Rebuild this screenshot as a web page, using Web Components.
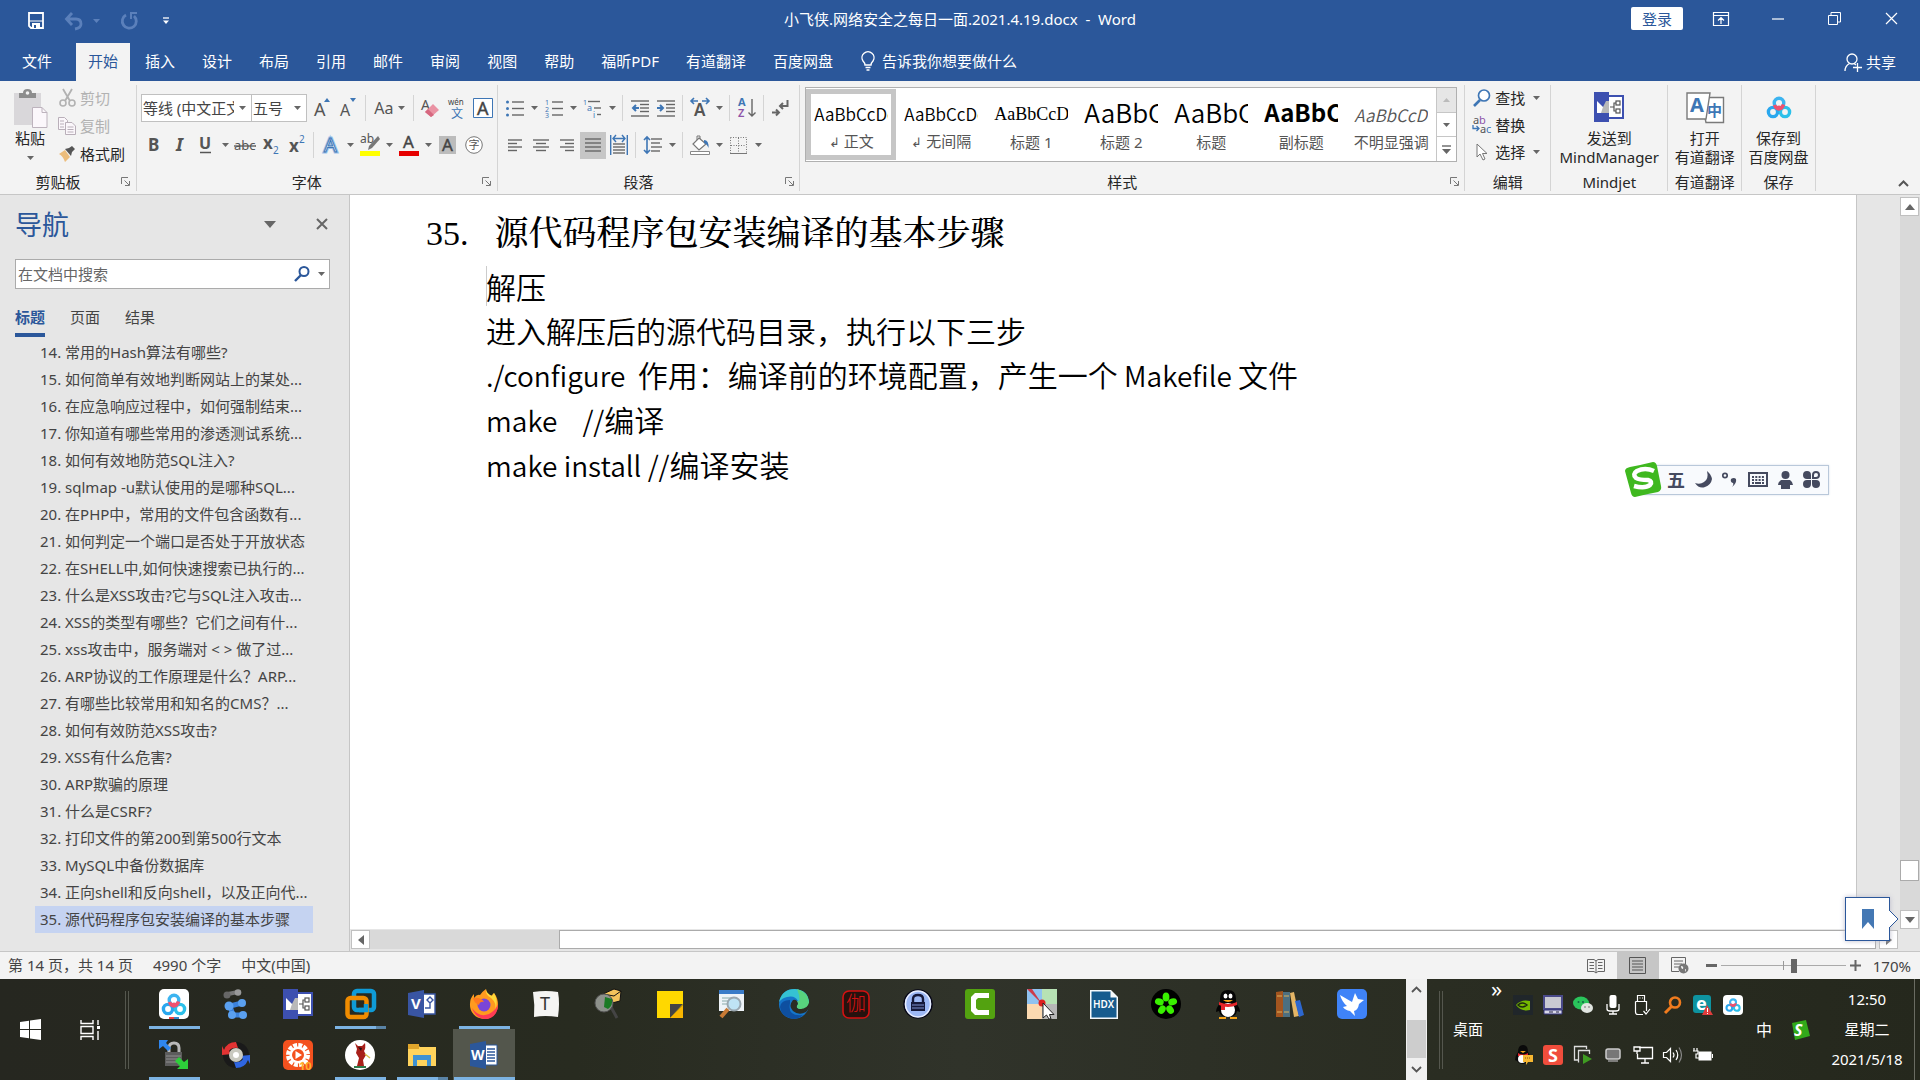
<!DOCTYPE html>
<html lang="zh-CN">
<head>
<meta charset="utf-8">
<title>小飞侠.网络安全之每日一面.2021.4.19.docx - Word</title>
<style>
html,body{margin:0;height:100%}
body{font:15px/20px "Noto Sans","Noto Sans CJK SC",sans-serif;color:#262626;overflow:hidden}
</style>
</head>
<body>
<word-app></word-app>
<script>
const BASE = `*{box-sizing:border-box}
button{font:inherit;color:inherit;background:none;border:0;padding:0;margin:0;cursor:default;display:flex;align-items:center;justify-content:center}
a{color:inherit;text-decoration:none}
ui-icon{flex:none}`;

function define(tag, css, html) {
  customElements.define(tag, class extends HTMLElement {
    connectedCallback() {
      if (this.shadowRoot) return;
      const t = document.createElement('template');
      t.innerHTML = `<style>${BASE}${css}</style>` + (typeof html === 'function' ? html(this) : html);
      this.attachShadow({mode: 'open'}).append(t.content.cloneNode(true));
    }
  });
}

/* name: [width, height, markup] */
const G = '#666', B = '#3e76b5';
const lines = (pts, c = G) => pts.map(p => `<path d="M${p[0]} ${p[1]}H${p[2]}" stroke="${c}" stroke-width="1.4"/>`).join('');
const T = (x, y, s, size, fill, extra = '') => `<text x="${x}" y="${y}" font-size="${size}" fill="${fill}" ${extra}>${s}</text>`;
const cloud = `<g fill="none" stroke-width="3.4"><circle cx="7" cy="16" r="4.6" stroke="#29a7ee"/><circle cx="19" cy="16" r="4.6" stroke="#2bc0ea"/><circle cx="13" cy="7" r="4.8" stroke="#3cb4f0"/><path d="M8.5 9Q10 13 13 12.500Q16.500 12.500 17.500 8.500" stroke="#f0506e"/></g><circle cx="13" cy="12" r="2.600" fill="#f0506e"/>`;
const mindjet = `<path d="M0 0H15V30H0z" fill="#3d50b0"/><path d="M14 4H29V26H14z" fill="#fff" stroke="#3d50b0" stroke-width="2"/><path d="M3 9L9 15V21H3z" fill="#fff"/><path d="M9 15L12 9H15V21H7z" fill="#b9b9b9"/><g fill="none" stroke="#555" stroke-width="1.200"><path d="M16 15H20M22 11H20V19H22"/><rect x="22" y="9" width="4" height="4"/><rect x="22" y="17" width="4" height="4"/></g>`;
const ICONS = {
  caret: [7,4,`<path d="M0 0H7L3.500 4z" fill="#666"/>`],
  save: [16,17,`<path d="M1 1H15V16H3L1 14z" fill="none" stroke="#fff" stroke-width="1.800"/><path d="M1 9H15" stroke="#fff"/><path d="M4 11H12V16H4z" fill="#fff"/><path d="M6 13H8V16H6z" fill="#2b579a"/>`],
  undo: [18,18,`<path d="M2 7H11Q16 7 16 12Q16 16 10 17M7 1L1.500 7L7 13" fill="none" stroke="#5b80bb" stroke-width="2.800"/>`],
  redo: [17,18,`<path d="M5 3A7 7 0 1 0 13 4" fill="none" stroke="#5b80bb" stroke-width="2.800"/><path d="M9 0H16V2H11V7H9z" fill="#5b80bb"/>`],
  caretDim: [7,4,`<path d="M0 0H7L3.500 4z" fill="#5b80bb"/>`],
  custom: [6,7,`<path d="M0 1H6" stroke="#fff" stroke-width="1.300"/><path d="M0 3.500H6L3 7z" fill="#fff"/>`],
  ribbonopt: [16,14,`<path d="M.5 .5H15.500V13.500H.5zM.5 3.500H15.500M8 12V6M5 8.500L8 5.500L11 8.500" fill="none" stroke="#fff" stroke-width="1.200"/>`],
  min: [12,2,`<path d="M0 1H12" stroke="#fff" stroke-width="1.200"/>`],
  restore: [13,13,`<path d="M.5 3.500H9.500V12.500H.5zM3 3V.5H12.500V10H10" fill="none" stroke="#fff"/>`],
  close: [13,13,`<path d="M1 1L12 12M12 1L1 12" stroke="#fff" stroke-width="1.200"/>`],
  closeG: [12,12,`<path d="M1 1L11 11M11 1L1 11" stroke="#666" stroke-width="2"/>`],
  bulb: [16,20,`<path d="M5 14Q5 12 3 10A6 6 0 1 1 13 10Q11 12 11 14zM5.500 16.500H10.500M6.500 19H9.500" fill="none" stroke="#fff" stroke-width="1.400"/>`],
  share: [18,19,`<circle cx="8" cy="6" r="5" fill="none" stroke="#fff" stroke-width="1.300"/><path d="M1 18Q1 13 5.500 10.500M10 10.500L12 12M13.500 10V19M9 14.500H18" fill="none" stroke="#fff" stroke-width="1.300"/>`],
  paste: [35,39,`<path d="M1 4H28V36H1z" fill="#d9d7da"/><path d="M6 4H10Q10 0 14.500 0Q19 0 19 4H23V9H6z" fill="#8d8d8d"/><circle cx="14.500" cy="4" r="1.800" fill="#f3f3f3"/><path d="M19.500 18.500H29L34 23.500V38.500H19.500z" fill="#fbf7fb" stroke="#bdb3bd"/><path d="M29 18.500V23.500H34" fill="none" stroke="#bdb3bd"/>`],
  cut: [17,18,`<path d="M4 0L11 12M13 0L6 12" stroke="#b2b2b2" stroke-width="1.800"/><g fill="none" stroke="#b2b2b2" stroke-width="1.600"><circle cx="4" cy="14" r="3"/><circle cx="13" cy="14" r="3"/></g>`],
  copy: [18,18,`<g fill="#fbf7fb" stroke="#b9afb9"><path d="M.5 .5H6.500L9.500 3.500V12.500H.5z"/><path d="M7.500 5.500H14L17.500 9V17.500H7.500z"/></g><path d="M2 4H6M2 7H6M2 10H6M9.500 10H15.500M9.500 12.500H15.500M9.500 15H15.500" stroke="#b9afb9"/>`],
  painter: [17,16,`<path d="M0 8L6 4L11 11L6 16Q4 10 0 8z" fill="#ecbd7c"/><path d="M6 3L10 2L13 0L16 3L13 6L12 10z" fill="#555"/>`],
  growA: [18,20,T(0,18,'A',18,'#555')+`<path d="M10 4L13 0L16 4z" fill="${B}"/>`],
  shrinkA: [18,20,T(0,18,'A',16,'#555')+`<path d="M10 0H16L13 4z" fill="${B}"/>`],
  eraser: [19,20,T(0,12,'A',14,'#555')+`<path d="M12 6L18 12L10 19L4 14z" fill="#ea92a3"/><path d="M4 14L7 11L13 17L10 19z" fill="#d6677f"/>`],
  wen: [17,22,T(0,8,'wén',8,'#444')+T(3,21,'文',12,B)],
  boxA: [20,20,`<path d="M.5 .5H19.500V19.500H.5z" fill="#fff" stroke="${B}"/>`+T(4,17,'A',18,'#444','stroke="#444" stroke-width=".4"')],
  bold: [13,16,T(1,14,'B',17,'#555','font-weight="700"')],
  ital: [13,16,T(3,14,'I',18,'#555','font-style="italic" font-family="Liberation Serif" font-weight="700"')],
  under: [13,18,T(0,13,'U',16,'#555','font-weight="700"')+`<path d="M1 16.500H12" stroke="#555" stroke-width="1.500"/>`],
  strike: [22,14,T(0,12,'abc',13,'#555')+`<path d="M0 8H22" stroke="#555" stroke-width="1.300"/>`],
  subx: [16,18,T(0,13,'x',17,'#555','font-weight="700"')+T(10,18,'2',10,B)],
  supx: [16,20,T(0,17,'x',17,'#555','font-weight="700"')+T(10,8,'2',10,B)],
  fx: [15,20,T(1,17,'A',20,'#fff','stroke="#9cc2ea" stroke-width="3"')+T(1,17,'A',20,'#fff',`stroke="${B}" stroke-width="1"`)],
  hilite: [20,22,T(0,9,'ab',12,'#555')+`<path d="M18 2L20 5L12 14L8 16L9 12z" fill="#777"/><path d="M0 17H20V22H0z" fill="#ffff00"/>`],
  fcolor: [20,22,T(4,14,'A',17,'#444','stroke="#444" stroke-width=".4"')+`<path d="M0 17H20V22H0z" fill="#e60000"/>`],
  shadeA: [18,18,`<path d="M0 0H17V18H0z" fill="#bcbcbc"/>`+T(3,15,'A',17,'#444','stroke="#444" stroke-width=".4"')],
  circ: [18,18,`<circle cx="9" cy="9" r="8.300" fill="#fff" stroke="#777"/>`+T(3.500,13,'字',11,'#555')],
  bullets: [18,17,lines([[6,2,18],[6,8.500,18],[6,15,18]])+`<g fill="${B}"><circle cx="1.500" cy="2" r="1.500"/><circle cx="1.500" cy="8.500" r="1.500"/><circle cx="1.500" cy="15" r="1.500"/></g>`],
  numbers: [18,19,lines([[7,3,18],[7,9.500,18],[7,16,18]])+T(0,6,1,7,B)+T(0,13,2,7,B)+T(0,19,3,7,B)],
  multi: [19,19,lines([[5,2.500,17],[11,9,18],[14,15.500,18]])+T(0,6,1,7,B)+T(4,12,'a',9,B)+T(10,19,'i',8,B)],
  outdent: [18,17,lines([[0,1,18],[9,4.500,18],[9,8,18],[9,11.500,18],[0,16,18]])+`<path d="M8 8H2M5 5L2 8L5 11" fill="none" stroke="${B}" stroke-width="2"/>`],
  indent: [18,17,lines([[0,1,18],[9,4.500,18],[9,8,18],[9,11.500,18],[0,16,18]])+`<path d="M0 8H6M3 5L6 8L3 11" fill="none" stroke="${B}" stroke-width="2"/>`],
  awide: [20,20,T(4,18,'A',17,'#555','font-weight="600"')+`<path d="M1 3H8M4 0L1 3L4 6M12 3H19M16 0L19 3L16 6" fill="none" stroke="${B}" stroke-width="1.600"/>`],
  az: [18,20,T(0,8,'A',11,B,'font-weight="700"')+T(0,19,'Z',11,'#8d54a8','font-weight="600"')+`<path d="M14 1V18M10.500 14.500L14 18L17.500 14.500" fill="none" stroke="#666" stroke-width="1.400"/>`],
  marks: [17,17,`<path d="M15.500 0V6H8M11 3L8 6L11 9M0 12.500H7M4 9.500L7 12.500L4 15.500" fill="none" stroke="#666" stroke-width="2"/>`],
  left: [14,13,lines([[0,1,14],[0,4.500,9],[0,8,14],[0,11.500,9]])],
  center: [16,13,lines([[0,1,16],[3,4.500,13],[0,8,16],[3,11.500,13]])],
  right: [14,13,lines([[0,1,14],[5,4.500,14],[0,8,14],[5,11.500,14]])],
  just: [16,14,lines([[0,1,16],[0,5,16],[0,9,16],[0,13,16]])],
  dist: [18,20,`<path d="M.7 0V20M17.300 0V20" stroke="${B}" stroke-width="1.400"/><path d="M3 3.500H15M6 0L3 3.500L6 7M12 0L15 3.500L12 7" fill="none" stroke="${B}" stroke-width="1.400"/>`+lines([[3,9,15],[3,12,15],[3,15,15],[3,18,15]])],
  spacing: [18,18,lines([[7,3,18],[7,7,16],[7,11,18],[7,15,16]])+`<path d="M3 1V17M0 4L3 1L6 4M0 14L3 17L6 14" fill="none" stroke="${B}" stroke-width="1.600"/>`],
  fill: [20,20,`<path d="M9 3L16 9L9 15L3 9z" fill="#fff" stroke="#777" stroke-width="1.200"/><path d="M7 5V1H10V4" fill="none" stroke="#777"/><path d="M14 5Q19 5 18.500 13Q17 9 14 8z" fill="${B}"/><path d="M.5 16.500H19.500V19.500H.5z" fill="#fff" stroke="#888"/>`],
  border: [17,17,`<path d="M.5 .5H16.500V16M.5 .5V16M8.500 1V16M1 8.500H16" fill="none" stroke="#777" stroke-dasharray="1 1.500"/><path d="M0 16.500H17" stroke="#777"/>`],
  launch: [9,9,`<path d="M.5 7V.5H7M3.500 3.500L8 8M8.500 4V8.500H4" fill="none" stroke="#777"/>`],
  find: [18,18,`<circle cx="11" cy="6.500" r="5.500" fill="#fff" stroke="${B}" stroke-width="1.700"/><path d="M7 11L1 17" stroke="${B}" stroke-width="2.600"/>`],
  replace: [20,18,T(1,8,'a',11,'#555')+T(7,8,'b',11,'#8d54a8')+T(8,17,'a',11,'#555')+T(14,17,'c',11,B)+`<path d="M1 9V12.500H7M4.500 10L7 12.500L4.500 15" fill="none" stroke="${B}" stroke-width="1.300"/>`],
  select: [12,18,`<path d="M1 1V14L4 11L7 17L9 16L6.500 10.500H11z" fill="#fff" stroke="#777"/>`],
  mind: [30,30,mindjet],
  youdao: [38,31,`<path d="M14.500 5.500H37.500V30.500H20z" fill="#fff" stroke="#7a7a7a" stroke-width="1.400"/><path d="M1 1H24L20 27H1z" fill="#fff" stroke="#7a7a7a" stroke-width="1.400"/>`+T(4,20,'A',20,B,'font-weight="700"')+T(21,24,'中',15,B,'font-weight="700"')],
  baidu: [26,22,cloud],
  up: [11,7,`<path d="M1 6L5.500 1.500L10 6" fill="none" stroke="#555" stroke-width="2"/>`],
  search: [16,16,`<circle cx="10" cy="5.500" r="4.500" fill="none" stroke="#2b579a" stroke-width="2"/><path d="M7 9L1 15" stroke="#2b579a" stroke-width="2.400"/>`],
  down12: [12,7,`<path d="M0 0H12L6 7z" fill="#666"/>`],
  tUp: [10,6,`<path d="M0 6H10L5 0z" fill="#666"/>`],
  tDown: [10,6,`<path d="M0 0H10L5 6z" fill="#666"/>`],
  tLeft: [6,10,`<path d="M6 0V10L0 5z" fill="#666"/>`],
  tRight: [6,10,`<path d="M0 0V10L6 5z" fill="#666"/>`],
  gUp: [7,4,`<path d="M0 4H7L3.500 0z" fill="#bbb"/>`],
  gMore: [9,9,`<path d="M0 1H9" stroke="#666" stroke-width="1.400"/><path d="M0 4H9L4.500 9z" fill="#666"/>`],
  bookmark: [12,20,`<path d="M0 0H12V20L6 13L0 20z" fill="#4478b4"/>`],
  vRead: [18,16,`<path d="M.5 1.500H7L9 3L11 1.500H17.500V13.500H11L9 15L7 13.500H.5zM9 3V15" fill="none" stroke="#666"/><path d="M2.500 4.500H7M2.500 7.500H7M2.500 10.500H7M11 4.500H15.500M11 7.500H15.500M11 10.500H15.500" stroke="#666"/>`],
  vPrint: [17,17,`<path d="M.5 .5H16.500V16.500H.5z" fill="none" stroke="#555"/><path d="M3 4H14M3 7H14M3 10H14M3 13H14" stroke="#555"/>`],
  vWeb: [18,17,`<path d="M8 14.500H.5V.5H14.500V7M3 4H12M3 7H11M3 10H8" fill="none" stroke="#666"/><circle cx="12.500" cy="11.500" r="5" fill="#777"/><path d="M10 9Q13 9 12 12Q10 12 10 9M14 12Q16 12 14 15z" fill="#f3f3f3"/>`],
  minus: [11,3,`<path d="M0 1.500H11" stroke="#666" stroke-width="3"/>`],
  plus: [11,11,`<path d="M0 5.500H11M5.500 0V11" stroke="#666" stroke-width="2"/>`],

  imeLogo: [36,35,`<path d="M5 5Q16 3 28 0Q31 0 32 4L36 24Q37 28 33 30Q22 32 10 35Q7 35 6 31L0 9Q0 6 5 5z" fill="#3fb81f"/><path d="M29 9Q20 5 12 9Q7 12 11 16Q14 18 23 18Q28 19 25 23Q20 27 9 24" fill="none" stroke="#fff" stroke-width="4.500"/>`],
  imeWu: [18,18,T(0,16,'五',18,'#454a5f','font-weight="700"')],
  moon: [17,17,`<path d="M12 0Q14 8 9 11Q5 14 0 12Q4 18 10 16Q16 14 17 8Q16 3 12 0z" fill="#454a5f"/>`],
  punct: [16,15,`<circle cx="3" cy="3.500" r="2.200" fill="none" stroke="#454a5f" stroke-width="1.700"/><path d="M9 7Q12 5 14 7Q15 11 10 15Q12 12 11 11Q8 10 9 7z" fill="#454a5f"/>`],
  kbd: [20,15,`<rect x="1" y="1" width="18" height="13" fill="none" stroke="#454a5f" stroke-width="2"/><path d="M4 5H16M4 8H16" stroke="#454a5f" stroke-width="2" stroke-dasharray="2 1.300"/><path d="M4 11H6M7 11H13M14 11H16" stroke="#454a5f" stroke-width="1.800"/>`],
  person: [15,18,`<circle cx="7.500" cy="4" r="4" fill="#454a5f"/><path d="M3 9H12Q15 11 15 14H12V18H3V14H0Q0 11 3 9z" fill="#454a5f"/>`],
  clover: [17,17,`<g fill="#454a5f"><path d="M8 8H4A4 4 0 1 1 8 4zM8 9V13A4 4 0 1 1 4 9zM9 9H13A4 4 0 1 1 9 13z"/></g><path d="M10 7V4A3 3 0 1 1 13 7z" fill="none" stroke="#454a5f" stroke-width="2"/>`],

  win: [21,21,`<path d="M0 3L9 1.800V10H0zM10 1.600L21 0V10H10zM0 11H9V19.200L0 18zM10 11H21V21L10 19.400z" fill="#fff"/>`],
  tview: [21,20,`<path d="M1 0V3.500H13V0M1 20V16.500H13V20M1 6.500H13V13.500H1zM18 0V5M18 11V20" fill="none" stroke="#fff" stroke-width="1.400"/><path d="M17 6H20V9H17z" fill="#fff"/>`],
  kBaidu: [30,30,`<rect width="30" height="30" rx="5" fill="#fff"/><g transform="translate(2 4)">${cloud}</g><path d="M10 28H15V30H10z" fill="#e44"/><path d="M15 28H20V30H15z" fill="#38c"/>`],
  kXs: [26,30,`<path d="M5 5L15 3" stroke="#777" stroke-width="4"/><circle cx="4" cy="6" r="3.500" fill="#666"/><circle cx="15" cy="3.500" r="3.300" fill="#999"/><path d="M19 14L7 17L10 26L20 26" fill="none" stroke="#3b82dd" stroke-width="5"/><g fill="#5aa0f0"><circle cx="19" cy="14" r="4"/><circle cx="6" cy="17" r="4.500"/><circle cx="9" cy="26" r="4"/><circle cx="20" cy="26" r="4"/></g>`],
  kMind: [30,30,mindjet],
  kVm: [31,31,`<rect x="9" y="2" width="20" height="19" rx="3" fill="none" stroke="#0f9bd7" stroke-width="4.500"/><rect x="2.500" y="9" width="19" height="19" rx="3" fill="none" stroke="#f08c00" stroke-width="4.500"/><path d="M14 21H21V15" fill="none" stroke="#0f9bd7" stroke-width="4.500"/>`],
  kVisio: [28,28,`<path d="M14 4H27V24H14z" fill="#fff" stroke="#3955a3" stroke-width="1.400"/><path d="M0 3L16 0V28L0 25z" fill="#3955a3"/>`+T(3,19,'V',15,'#fff','font-weight="700"')+`<path d="M17 18H22V13M22 7L25 10L22 13L19 10z" fill="none" stroke="#3955a3" stroke-width="1.400"/>`],
  kFox: [30,30,`<path d="M15 30A14 14 0 0 1 1 15Q1 9 5 5V9Q8 5 11 6Q14 2 17 0Q17 5 22 7L25 4Q29 9 29 16A14 14 0 0 1 15 30z" fill="#ff9a1f"/><path d="M3 19Q10 29 20 25Q27 21 29 15Q29 27 19 30Q7 31 3 19z" fill="#ff3b53"/><path d="M17 0Q16 6 22 9Q28 14 26 21Q30 12 25 4L23 7Q17 4 17 0z" fill="#ffd83a"/><circle cx="15" cy="16" r="6.500" fill="#7a45d8"/><path d="M4 9Q12 8 15 13Q11 12 10 16Q5 14 4 9z" fill="#ff7a1f"/>`],
  kT: [28,28,`<path d="M1 2Q14 0 26 2Q28 13 26 27Q13 25 2 27Q3 15 1 2z" fill="#f5f5f3"/>`+T(8,20,'T',18,'#333','font-family="Liberation Serif"')],
  kNet: [28,30,`<path d="M9 5L20 0L27 2L26 12L14 15z" fill="#f3c35c" stroke="#111"/><path d="M9 5L20 7L27 2" fill="none" stroke="#111"/><path d="M17 18L23 29" stroke="#444" stroke-width="3"/><circle cx="10" cy="14" r="9" fill="#8d918b" stroke="#555"/><path d="M11 8L18 10Q19 17 14 20L10 18z" fill="#1b7a25"/>`],
  kNote: [26,27,`<path d="M0 0H26V14L13 27H0z" fill="#ffd800"/><path d="M13 13H26L13 27z" fill="#444"/><path d="M26 14V27H13z" fill="#f7b500"/>`],
  kFind: [26,28,`<path d="M0 0H25V21H0z" fill="#eef3f8"/><path d="M0 0H25V4H0z" fill="#3a7bc8"/><path d="M3 8H14M3 11H12M3 14H11" stroke="#8aa" /><path d="M9 19L2 27" stroke="#c87a35" stroke-width="4"/><circle cx="15" cy="14" r="6.500" fill="#bfe3f5" stroke="#9aa7b0" stroke-width="2"/>`],
  kEdge: [30,30,`<circle cx="15" cy="15" r="15" fill="#1575c9"/><path d="M0 13Q3 0 16 0Q29 1 30 13Q29 20 21 20Q18 19 18 17Q20 15 19 12Q16 6 8 8Q3 9 0 13z" fill="#35c2d3"/><path d="M18 0Q29 3 30 13Q29 20 21 20Q17 19 18 17Q23 12 18 0z" fill="#58d27e"/><path d="M11 14Q8 28 24 26Q20 30 14 30Q2 28 1 18Q2 11 11 11z" fill="#0e4fa0"/><path d="M14 11Q9 17 14 22Q20 27 27 23Q28 22 30 19V14L22 20Q17 20 18 17Q20 14 18 12Q16 10 14 11z" fill="#2b2d24"/><path d="M18 12L30 13Q29 20 21 20Q17 19 18 17Q20 15 18 12z" fill="#58d27e"/>`],
  kJia: [28,29,`<rect x="1" y="1" width="26" height="27" rx="6" fill="#26120e" stroke="#d41111" stroke-width="1.600"/>`+T(4,21,'伽',20,'#d41111','font-weight="300"')],
  kLock: [30,30,`<ellipse cx="15" cy="15" rx="14" ry="14" fill="#9db8f5" stroke="#050515" stroke-width="1.500"/><ellipse cx="15" cy="15" rx="12.500" ry="13" fill="none" stroke="#e7edff" stroke-width="1.500"/><path d="M10 14V10Q10 6 15 6Q20 6 20 10V14" fill="none" stroke="#15183a" stroke-width="2.400"/><path d="M8 13H22V22H8z" fill="#15183a"/><path d="M9 16H21M9 19H21" stroke="#7f90cf"/>`],
  kCam: [30,30,`<rect width="30" height="30" rx="3" fill="#53a210"/><path d="M24 4V9H13L11 11V19L13 21H24V26H10L6 22V8L10 4z" fill="#fff"/>`],
  kPaint: [30,30,`<path d="M0 0H15V15H0z" fill="#8fc2f0"/><path d="M15 0H30V15H15z" fill="#b7e2b4"/><path d="M0 15H15V30H0z" fill="#fbd9b0"/><path d="M15 15H30V30H15z" fill="#b7b7b7"/><path d="M0 0L15 15L5 0z" fill="#cc3b4a"/><circle cx="15" cy="14" r="3.500" fill="#dd1f1f"/><path d="M16 14V29L19.500 26L22 30H24L22.500 25.500H27z" fill="#fff" stroke="#222"/>`],
  kHdx: [28,29,`<path d="M0 0H21L28 7V29H0z" fill="#f5f9fb"/><path d="M1.500 1.500H20.500V7.500H26.500V27.500H1.500z" fill="#175c8e"/>`+T(3,18,'HDX',10,'#fff','font-weight="600"')],
  kFlower: [30,30,`<ellipse cx="15" cy="15" rx="15" ry="15" fill="#000"/><g fill="#39f000"><ellipse cx="15" cy="8" rx="3.400" ry="4.500"/><ellipse cx="15" cy="8" rx="3.400" ry="4.500" transform="rotate(72 15 15)"/><ellipse cx="15" cy="8" rx="3.400" ry="4.500" transform="rotate(144 15 15)"/><ellipse cx="15" cy="8" rx="3.400" ry="4.500" transform="rotate(216 15 15)"/><ellipse cx="15" cy="8" rx="3.400" ry="4.500" transform="rotate(288 15 15)"/></g>`],
  kQq: [24,29,`<path d="M12 0Q20 0 20 9V13Q24 18 24 22L21 21Q20 27 12 27Q4 27 3 21L0 22Q0 18 4 13V9Q4 0 12 0z" fill="#050505"/><ellipse cx="12" cy="20" rx="7" ry="7" fill="#fff"/><path d="M3 12Q12 16 21 12L21 15Q12 19 3 15zM5 15H9V20H5z" fill="#e5252a"/><ellipse cx="9.500" cy="6" rx="2" ry="2.600" fill="#fff"/><ellipse cx="14.500" cy="6" rx="2" ry="2.600" fill="#fff"/><path d="M7 10H17Q12 14 7 10zM3 27H10V29H3zM14 27H21V29H14z" fill="#f5a31a"/>`],
  kBooks: [30,30,`<path d="M1 3L8 2V28H1z" fill="#a3551f"/><path d="M8 3H15V28H8z" fill="#4c6f80"/><path d="M15 4L19 3L24 27L19 28z" fill="#e4b566"/><path d="M20 12L25 11L29 26L24 28z" fill="#2d67cf"/><path d="M2 7H7M2 23H7M9 7H14M9 23H14" stroke="#dcb25c"/>`],
  kBird: [30,30,`<rect width="30" height="30" rx="5" fill="#3f83f8"/><path d="M3 6L15 13L18 4L21 10L27 11L22 15Q21 21 17 22L18 27L13 22Q8 21 6 18L10 17Q5 13 3 6z" fill="#fff"/>`],
  kPadlock: [30,29,`<path d="M10 15V8Q10 3 15 3Q20 3 20 8V15" fill="none" stroke="#b9b9b9" stroke-width="3"/><rect x="6" y="12" width="17" height="14" fill="#5c5c5c"/><path d="M7 16H22M7 19H22M7 22H22" stroke="#8f8f8f"/><path d="M0 0H9L7 3L12 8L9 11L4 6L0 9z" fill="#2f86ee"/><path d="M29 29H18L21 26L16 21L20 17L25 22L29 19z" fill="#2dcf3a"/>`],
  kReel: [28,28,`<circle cx="14" cy="14" r="13" fill="#1a1a1a"/><path d="M14 1Q5 1 2 9L0 5V14L10 13L7 10Q10 6 16 7z" fill="#e23333"/><path d="M14 27Q23 27 26 19L28 23V14L18 15L21 18Q18 22 12 21z" fill="#2f66e2"/><circle cx="14" cy="14" r="7" fill="#c9c9c0"/><circle cx="14" cy="14" r="3" fill="#fff"/>`],
  kOrange: [30,30,`<rect width="30" height="30" rx="5" fill="#f4511e"/><circle cx="15" cy="15" r="10" fill="none" stroke="#fff" stroke-width="4" stroke-dasharray="4 1.236"/><circle cx="15" cy="15" r="8.500" fill="#fff"/><circle cx="15" cy="15" r="6" fill="#f4511e"/><path d="M12.500 11L19 15L12.500 19z" fill="#fff"/>`+T(16,30,'10',11,'#ffb02e','font-weight="700"')],
  kDevil: [30,30,`<ellipse cx="15" cy="15" rx="15" ry="15" fill="#fff"/><path d="M10 3L13 6H17L20 3Q21 8 19 11L21 15L18 20L19 26H12L14 18L11 13L12 9z" fill="#a8201a"/><path d="M13 7L17 8L16 11z" fill="#241010"/><path d="M9 26H21V28H9z" fill="#2f7a4a"/><path d="M20 14L25 18" stroke="#d8c04a" stroke-width="1.500"/>`],
  kFolder: [28,24,`<path d="M0 1H9L12 4H28V23H0z" fill="#ffd35c"/><path d="M0 1H11V6H0z" fill="#e0a52b"/><path d="M5 23V12H23V23H19V17H9V23z" fill="#3f92d2"/>`],
  kWord: [28,28,`<path d="M14 4H27V24H14z" fill="#fff" stroke="#2b579a"/><path d="M17 8H25M17 11H25M17 14H25M17 17H25M17 20H25" stroke="#2b579a" stroke-width="1.300"/><path d="M0 3L16 0V28L0 25z" fill="#2b579a"/>`+T(1,19,'W',14,'#fff','font-weight="700"')],

  tNv: [20,20,`<rect width="20" height="20" fill="#20262a"/><path d="M3 10Q8 4 17 6V15Q8 17 3 10z" fill="#76b900"/><path d="M5 10Q9 6 14 10Q9 14 5 10z" fill="none" stroke="#1d2a10" stroke-width="1.500"/>`],
  tBox: [20,20,`<rect x="1" y="1" width="18" height="13" fill="#c9c9d2" stroke="#4a4a8a" stroke-width="2"/><path d="M1 15H19V19H1z" fill="#d8d8e8" stroke="#33337a"/><path d="M6 17H10M13 17H16" stroke="#224"/>`],
  tWx: [20,18,`<ellipse cx="8" cy="7" rx="8" ry="6.500" fill="#2ac45b"/><circle cx="5.500" cy="6" r="1" fill="#164"/><circle cx="10" cy="6" r="1" fill="#164"/><ellipse cx="14" cy="12" rx="6" ry="5" fill="#e2e6e2"/><circle cx="12" cy="11" r=".8" fill="#666"/><circle cx="16" cy="11" r=".8" fill="#666"/>`],
  tMic: [14,20,`<rect x="3.500" y="0" width="7" height="13" rx="2" fill="#fff"/><path d="M1 9V14Q1 16 4 16H10Q13 16 13 14V9M7 16V19M3 19H11" fill="none" stroke="#fff" stroke-width="1.300"/>`],
  tUsb: [15,20,`<path d="M2.500 6V.5H9.500V6M.5 6.500H11.500V16M.5 6.500V17Q.5 19.500 3 19.500H8M4.500 3H5.500M7 3H8M8.500 16L11 19L15 14" fill="none" stroke="#fff" stroke-width="1.200"/>`],
  tMag: [18,18,`<circle cx="11" cy="6.500" r="5" fill="none" stroke="#f07b1e" stroke-width="2.600"/><path d="M7.500 10.500L1 17" stroke="#f07b1e" stroke-width="3"/>`],
  tE: [20,20,`<rect width="18" height="18" rx="3" fill="#0e93a0"/>`+T(3,15,'e',18,'#fff','font-weight="700"')+`<path d="M14 10L20 20H9z" fill="#e03c3c"/><path d="M14.500 13V17M14.500 18V19" stroke="#fff"/>`],
  tBd: [20,20,`<rect width="20" height="20" rx="4" fill="#fff"/><g transform="translate(2 3) scale(.62)">${cloud}</g>`],
  tQq: [20,20,`<path d="M10 0Q15 0 15 7Q18 11 18 15L15 16Q12 19 10 19Q6 19 4 16L2 15Q2 11 5 7Q5 0 10 0z" fill="#0a0a0a"/><path d="M5 8Q10 11 15 8V11H5z" fill="#e5252a"/><ellipse cx="9" cy="14" rx="4" ry="4" fill="#fff"/><path d="M7 6H13L10 8z" fill="#f5a31a"/><path d="M10 10H20V17H15L13 20V17H10z" fill="#f7b731"/><path d="M12 13H18" stroke="#805a10" stroke-dasharray="1 1"/>`],
  tS: [20,20,`<rect width="20" height="20" rx="3" fill="#f04d3c"/>`+T(5,17,'S',18,'#fff','font-weight="700"')],
  tPlay: [18,18,`<path d="M4 14H.5V.5H12.500V3M4.500 16.500V4.500H15.500V8" fill="none" stroke="#ddd" stroke-width="1.300"/><path d="M9 8L18 13L9 18z" fill="#3f9b22"/>`],
  tDev: [16,14,`<rect x="1" y="1" width="14" height="10" rx="2" fill="#777" stroke="#ccc" stroke-width="1.500"/><path d="M3 13H13" stroke="#999" stroke-width="1.500"/>`],
  tNet: [20,18,`<path d="M6 1.500H19.500V12.500H4.500V8M12 13V17M8 17H16M1 1H7V5H1zM4 5V8" fill="none" stroke="#fff" stroke-width="1.300"/>`],
  tVol: [20,16,`<path d="M.5 5.500H3.500L7.500 1.500V14.500L3.500 10.500H.5z" fill="none" stroke="#fff" stroke-width="1.200"/><path d="M10 5.500Q12 8 10 10.500M13 3Q16.500 8 13 13" fill="none" stroke="#fff" stroke-width="1.200"/><path d="M16 .5Q21 8 16 15.500" fill="none" stroke="#888" stroke-width="1.200"/>`],
  tBat: [20,13,`<rect x="6" y="4" width="12" height="8" fill="#fff" stroke="#fff"/><path d="M19.500 6V10" stroke="#fff"/><path d="M1 0V3M4 0V3M0 3H5V6H3V10H6" fill="none" stroke="#fff" stroke-width="1.200"/>`],
  tSogou: [20,20,`<path d="M2 3L16 0L20 16L5 20z" fill="#32a91a"/>`+T(4,16,'S',16,'#fff','font-weight="700" font-style="italic"')],
  chUp: [11,7,`<path d="M1 6L5.500 1.500L10 6" fill="none" stroke="#555" stroke-width="1.800"/>`],
  chDown: [11,7,`<path d="M1 1L5.500 5.500L10 1" fill="none" stroke="#555" stroke-width="1.800"/>`]
};
define('ui-icon', `:host{display:block}svg{display:block;overflow:visible}text{font-family:inherit}`, el => {
  const [w, h, body] = ICONS[el.getAttribute('name')];
  return `<svg width="${w}" height="${h}" viewBox="0 0 ${w} ${h}" aria-hidden="true">${body}</svg>`;
});
const I = n => `<ui-icon name="${n}"></ui-icon>`;

define('title-bar', `:host{display:grid;grid-template-columns:1fr auto 1fr;height:43px;padding-bottom:6px;color:#fff;align-items:center}
.l{display:flex;align-items:center;padding:4px 0 0 28px;gap:21px}.u{display:flex;align-items:center;gap:10px}.l>:first-child+div+button+button{margin-left:4px}
.r{display:flex;align-items:center;justify-content:flex-end}
.r button{width:57px;height:36px}.r .login{width:52px;height:23px;background:#fff;color:#2b579a;border-radius:2px;margin-right:9px}`,
`<div class="l"><button aria-label="保存">${I('save')}</button><div class="u"><button aria-label="撤消">${I('undo')}</button>${I('caretDim')}</div><button aria-label="恢复">${I('redo')}</button><button aria-label="自定义">${I('custom')}</button></div>
<div>小飞侠.网络安全之每日一面.2021.4.19.docx&nbsp; -&nbsp; Word</div>
<div class="r"><button class="login">登录</button><button aria-label="功能区显示选项">${I('ribbonopt')}</button><button aria-label="最小化">${I('min')}</button><button aria-label="还原">${I('restore')}</button><button aria-label="关闭">${I('close')}</button></div>`);

define('ribbon-tabs', `:host{display:flex;height:38px;color:#fff;gap:3px}
button{padding:0 12px 3px;height:38px}.file{padding:0 21px 3px 22px}
.on{background:#f3f3f3;color:#2b579a}.tell{gap:6px}.share{margin-left:auto;padding:0 24px;gap:4px}`,
`<button class="file">文件</button><button class="on">开始</button>${['插入','设计','布局','引用','邮件','审阅','视图','帮助','福昕PDF','有道翻译','百度网盘'].map(t => `<button>${t}</button>`).join('')}<button class="tell">${I('bulb')}<span>告诉我你想要做什么</span></button><button class="share">${I('share')}<span>共享</span></button>`);

define('ribbon-group', `:host{display:flex;flex-direction:column;margin:4px 0 3px;border-right:1px solid #d4d4d4}
.b{flex:1;min-height:0}.f{display:flex;height:19px;align-items:center}.f span{flex:1;text-align:center}.f button{width:20px;height:20px}`,
el => `<div class="b"><slot></slot></div><div class="f"><span>${el.getAttribute('label')}</span>${el.hasAttribute('launcher') ? `<button aria-label="${el.getAttribute('label')}设置">${I('launch')}</button>` : ''}</div>`);

/* One row of icon buttons: "name" is a button, "v" a drop-down caret, "|" a separator */
define('tool-row', `:host{display:flex;height:28px;align-items:center}
button{width:26px;height:27px}.v{width:13px}.on{background:#c6c6c6}.aa{width:40px;gap:5px;font-size:16px;color:#555}
.s{width:8px;height:26px;background:linear-gradient(#d4d4d4,#d4d4d4) center/1px 100% no-repeat}`,
el => el.getAttribute('items').split(' ').map(n => n === '|' ? '<span class="s"></span>' : n === 'v' ? `<button class="v" aria-label="更多">${I('caret')}</button>` : n === 'Aa' ? `<button class="aa">Aa${I('caret')}</button>` : `<button class="${n === 'just' ? 'on' : ''}" aria-label="${n}">${I(n)}</button>`).join('')
);

define('combo-box', `:host{display:flex;align-items:center;height:28px;background:#fff;border:1px solid #c0c0c0;padding-right:5px}
select{appearance:none;border:0;background:none;font:inherit;color:#444;flex:1;min-width:0;padding:0 0 0 1px;margin-right:5px;outline:0;height:26px;text-overflow:clip;overflow:hidden}`,
el => `<select aria-label="${el.getAttribute('label')}"><option>${el.getAttribute('value')}</option></select>${I('caret')}`);

define('side-command', `:host{display:block}button{height:100%;gap:4px;justify-content:flex-start;padding-bottom:2px}.i{width:18px;display:flex;justify-content:center}ui-icon.c{margin-left:4px}`,
el => `<button><span class="i">${I(el.getAttribute('icon'))}</span><span><slot></slot></span>${el.hasAttribute('caret') ? `<ui-icon class="c" name="caret"></ui-icon>` : ''}</button>`);

define('big-command', `:host{display:block}button{flex-direction:column;width:100%;line-height:19px}.i{height:44px;display:flex;align-items:center}`,
el => `<button><span class="i">${I(el.getAttribute('icon'))}</span><span><slot></slot></span></button>`);

define('style-card', `:host{display:block;width:90px;height:71px}
button{width:100%;height:100%;flex-direction:column;border:5px solid transparent;padding:0 3px}
:host([on]) button{border-color:#c6c6c6}
.p{width:74px;height:34px;overflow:hidden;white-space:nowrap;text-align:left;font:var(--w,350) var(--s,17px)/var(--l,33px) var(--f,"Noto Sans CJK SC"),sans-serif;font-style:var(--i,normal);color:var(--c,#000)}
.n{line-height:20px;color:#555;white-space:nowrap}`,
el => `<button><span class="p">AaBbCcDc</span><span class="n">${el.getAttribute('mark') ? '<small>↲</small> ' : ''}${el.getAttribute('label')}</span></button>`);

define('word-ribbon', `:host{display:flex;height:114px;background:#f3f3f3;border-bottom:1px solid #c6c6c6}
ribbon-group{width:var(--gw)}
.clip{display:flex;height:84px}.paste{width:52px;flex-direction:column;justify-content:flex-start;padding:4px 0 0 8px;line-height:20px}
.paste ui-icon.c{margin-top:8px}.side{padding-left:6px;color:#262626}.side side-command{height:28px}.dim{color:#b2b2b2}
.rows{display:flex;flex-direction:column;gap:9px;padding-top:9px}.row{display:flex}.font{padding-left:4px}.para{padding-left:4px}
.cmb1{width:111px}.cmb2{width:56px;margin-left:-1px;margin-right:3px}
.gal{display:flex;height:75px;margin:2px 7px 0 5px;border:1px solid #b0b0b0;background:#fff}.cards{display:flex;flex:1;overflow:hidden;padding-top:1px}
.gb{width:20px;display:flex;flex-direction:column;border-left:1px solid #c6c6c6}.gb button{flex:1}.gb button+button{border-top:1px solid #c6c6c6}.gb .off{background:#e6e6e6}
.styles{flex:1}.edit{padding-left:8px}.edit side-command{height:27px}.tail{width:104px;display:flex;align-items:flex-end;justify-content:flex-end;padding:0 11px 7px}`,
`<ribbon-group label="剪贴板" launcher style="--gw:137px"><div class="clip"><button class="paste">${I('paste')}<span>粘贴</span><ui-icon class="c" name="caret"></ui-icon></button><div class="side"><side-command icon="cut" class="dim">剪切</side-command><side-command icon="copy" class="dim">复制</side-command><side-command icon="painter">格式刷</side-command></div></div></ribbon-group>
<ribbon-group label="字体" launcher style="--gw:361px"><div class="rows font"><div class="row"><combo-box class="cmb1" label="字体" value="等线 (中文正文)"></combo-box><combo-box class="cmb2" label="字号" value="五号"></combo-box><tool-row items="growA shrinkA | Aa | eraser wen boxA"></tool-row></div><tool-row items="bold ital under v strike subx supx | fx v hilite v fcolor v shadeA circ"></tool-row></div></ribbon-group>
<ribbon-group label="段落" launcher style="--gw:303px"><div class="rows para"><tool-row items="bullets v numbers v multi v | outdent indent | awide v | az | marks"></tool-row><tool-row items="left center right just dist | spacing v | fill v border v"></tool-row></div></ribbon-group>
<ribbon-group label="样式" launcher class="styles"><div class="gal"><div class="cards">
<style-card on mark="1" label="正文"></style-card><style-card mark="1" label="无间隔"></style-card><style-card label="标题 1" style="--f:'Liberation Serif';--w:400;--s:18px"></style-card><style-card label="标题 2" style="--s:26px;--l:28px"></style-card><style-card label="标题" style="--s:26px;--l:28px"></style-card><style-card label="副标题" style="--s:24px;--l:28px;--w:700"></style-card><style-card label="不明显强调" style="--i:italic;--c:#555"></style-card></div>
<div class="gb"><button class="off" aria-label="上一行">${I('gUp')}</button><button aria-label="下一行">${I('caret')}</button><button aria-label="其他">${I('gMore')}</button></div></div></ribbon-group>
<ribbon-group label="编辑" style="--gw:86px"><div class="edit"><side-command icon="find" caret>查找</side-command><side-command icon="replace">替换</side-command><side-command icon="select" caret>选择</side-command></div></ribbon-group>
<ribbon-group label="Mindjet" style="--gw:117px"><big-command icon="mind">发送到<br>MindManager</big-command></ribbon-group>
<ribbon-group label="有道翻译" style="--gw:74px"><big-command icon="youdao">打开<br>有道翻译</big-command></ribbon-group>
<ribbon-group label="保存" style="--gw:74px"><big-command icon="baidu">保存到<br>百度网盘</big-command></ribbon-group>
<div class="tail"><button aria-label="折叠功能区">${I('up')}</button></div>`);

const HEADS = ['常用的Hash算法有哪些?','如何简单有效地判断网站上的某处...','在应急响应过程中，如何强制结束...','你知道有哪些常用的渗透测试系统...','如何有效地防范SQL注入?','sqlmap -u默认使用的是哪种SQL...','在PHP中，常用的文件包含函数有...','如何判定一个端口是否处于开放状态','在SHELL中,如何快速搜索已执行的...','什么是XSS攻击?它与SQL注入攻击...','XSS的类型有哪些？它们之间有什...','xss攻击中，服务端对 &lt; &gt; 做了过...','ARP协议的工作原理是什么？ARP...','有哪些比较常用和知名的CMS？...','如何有效防范XSS攻击?','XSS有什么危害?','ARP欺骗的原理','什么是CSRF?','打印文件的第200到第500行文本','MySQL中备份数据库','正向shell和反向shell，以及正向代...','源代码程序包安装编译的基本步骤'];
define('nav-pane', `:host{display:block;width:350px;background:#e6e6e6;border-right:1px solid #c6c6c6;color:#444;padding:9px 19px 0 15px}
header{display:flex;align-items:center;height:40px}h2{margin:0;font:400 27px/40px "Noto Sans CJK SC",sans-serif;color:#2b579a;flex:1}header button{width:16px;height:26px;margin-left:36px}
.q{display:flex;align-items:center;height:30px;background:#fff;border:1px solid #ababab;margin:15px 0 12px;padding-right:4px;gap:8px}
input{flex:1;min-width:0;border:0;outline:0;font:inherit;padding:0 2px;background:none}input::placeholder{color:#666;opacity:1}
.t{display:flex;gap:25px;height:36px}.t button{height:36px;padding-bottom:1px;border-bottom:4px solid transparent}.t .on{font-weight:700;color:#2b579a;border-color:#2b579a}
ol{list-style:none;margin:2px 0 0;padding:0 17px 0 20px}a{display:block;height:27px;line-height:27px;padding-left:5px;white-space:nowrap}a.on{background:#c5d3f1}`,
`<header><h2>导航</h2><button aria-label="任务窗格选项">${I('down12')}</button><button aria-label="关闭">${I('closeG')}</button></header>
<div class="q"><input aria-label="在文档中搜索" placeholder="在文档中搜索"><button aria-label="搜索">${I('search')}</button>${I('caret')}</div>
<div class="t"><button class="on">标题</button><button>页面</button><button>结果</button></div>
<ol>${HEADS.map((h, i) => `<li><a href="#h${i + 14}" class="${i === 21 ? 'on' : ''}">${i + 14}. ${h}</a></li>`).join('')}</ol>`);

define('doc-page', `:host{display:block;background:#fff;border-right:1px solid #c6c6c6;color:#000;padding:15px 0 0 76px;overflow:hidden}
h1{display:flex;gap:26px;margin:0;font:500 34px/48px "Liberation Serif","Noto Serif CJK SC","Noto Sans CJK SC",serif}
.x{padding:6px 0 0 60px}p{margin:0;font:350 30px/44px "Noto Sans CJK SC",sans-serif;white-space:pre}span.l{font-size:28px}p:first-child{background:linear-gradient(#ccc,#ccc) 0 2px/1px 40px no-repeat}`,
`<h1 id="h35"><span>35.</span><span>源代码程序包安装编译的基本步骤</span></h1><div class="x"><p>解压</p><p>进入解压后的源代码目录，执行以下三步</p><p><span class="l">./configure  </span>作用：编译前的环境配置，产生一个<span class="l"> Makefile </span>文件</p><p><span class="l">make    //</span>编译</p><p><span class="l">make install //</span>编译安装</p></div>`);

define('v-scroll', `:host{display:flex;flex-direction:column;background:#d9d9d9;width:20px}button,.th{width:19px;height:19px;background:#fff;border:1px solid #c0c0c0;flex:none}.th{height:21px;border-color:#ababab}.g{flex:1}.k{height:29px}`,
`<button aria-label="上">${I('tUp')}</button><div class="g"></div><div class="th"></div><div class="k"></div><button aria-label="下">${I('tDown')}</button>`);
define('h-scroll', `:host{display:flex;height:21px;padding:1px 22px 1px 1px;background:#e6e6e6}button{width:19px;height:19px;background:#fff;border:1px solid #c0c0c0;flex:none}.tr{flex:1;display:flex;background:#d9d9d9;margin-right:3px}.th{margin-left:189px;flex:1;background:#fff;border:1px solid #ababab}`,
`<button aria-label="左">${I('tLeft')}</button><div class="tr"><div class="th"></div></div><button aria-label="右">${I('tRight')}</button>`);

define('ime-bar', `:host{display:flex;align-items:center;height:31px}.logo{margin-right:-18px;z-index:1}
.b{display:flex;align-items:center;height:30px;border:1px solid #b9c8da;background:#f8fafd;padding:0 8px 0 23px;gap:10px;box-shadow:0 0 2px #d6dde8}`,
`<ui-icon class="logo" name="imeLogo"></ui-icon><div class="b">${['imeWu','moon','punct','kbd','person','clover'].map(n => `<button aria-label="${n}">${I(n)}</button>`).join('')}</div>`);

define('jump-mark', `:host{display:block;width:54px;height:44px}button{width:45px;height:44px;background:#fff;border:1px solid #2b579a;box-shadow:0 0 5px #bbc}svg{position:absolute;left:44px;top:13px}`,
`<button aria-label="书签">${I('bookmark')}</button><svg width="10" height="18"><path d="M0 0L9 9L0 18" fill="#fff" stroke="#2b579a"/></svg>`);

define('work-area', `:host{display:flex;min-height:0}.d{flex:1;min-width:0;position:relative;display:grid;grid-template:1fr 22px/1fr 20px;background:#e6e6e6}
doc-page{margin-right:43px}v-scroll{margin-top:2px}h-scroll{grid-column:1/3}
ime-bar{position:absolute;right:91px;top:269px}jump-mark{position:absolute;right:21px;bottom:10px}`,
`<nav-pane></nav-pane><div class="d"><doc-page></doc-page><v-scroll></v-scroll><h-scroll></h-scroll><ime-bar></ime-bar><jump-mark></jump-mark></div>`);

define('status-bar', `:host{display:flex;height:28px;background:#f3f3f3;border-top:1px solid #c6c6c6;align-items:center;padding:0 9px 0 8px;gap:20px;color:#444}
:host>span{padding-bottom:2px}
.r{margin-left:auto;display:flex;align-items:center;height:100%}.r .v{width:42px;height:100%}.on{background:#c6c6c6}.m{margin:0 4px 0 5px}.p{margin:0 12px 0 4px}
input{appearance:none;width:125px;height:20px;margin:0;background:linear-gradient(#999,#999) 50% 50%/1px 9px no-repeat,linear-gradient(#aaa,#aaa) 0 50%/100% 1px no-repeat}
input::-webkit-slider-thumb{appearance:none;width:6px;height:14px;background:#666}`,
`<span>第 14 页，共 14 页</span><span>4990 个字</span><span>中文(中国)</span><div class="r"><button class="v" aria-label="阅读视图">${I('vRead')}</button><button class="v on" aria-label="页面视图">${I('vPrint')}</button><button class="v" aria-label="Web 版式">${I('vWeb')}</button><button class="m" aria-label="缩小">${I('minus')}</button><input type="range" aria-label="缩放" min="0" max="100" value="59"><button class="p" aria-label="放大">${I('plus')}</button><span>170%</span></div>`);

const R1 = ['kBaidu*','kXs','kMind','kVm+','kVisio','kFox*','kT','kNet','kNote','kFind','kEdge','kJia','kLock','kCam','kPaint','kHdx','kFlower','kQq','kBooks','kBird'];
const R2 = ['kPadlock*','kReel','kOrange','kDevil*','kFolder+','kWord!'];
const cell = n => { const m = n.match(/^(\w+)(.?)$/); return `<button class="${{'*':'run','+':'run many','!':'act'}[m[2]] || ''}" aria-label="${m[1].slice(1)}">${I(m[1])}</button>`; };
define('task-bar', `:host{display:flex;height:101px;background:linear-gradient(90deg,#262720,#282b20 30%,#30332a 50%,#2a2d22 75%,#25281d);color:#fff;align-items:center}
.dv{width:4px;height:78px;border:1px solid #55574e;border-width:0 1px;flex:none}
.st{flex:none;width:60px;height:100%}.tv{flex:none;width:61px;height:100%;margin-right:4px}.apps{flex:1;min-width:0;margin-left:14px;height:101px}
.row{display:flex;height:50px}.row+.row{height:51px}.row button{width:62px;height:100%;flex:none;background:linear-gradient(var(--u,transparent),var(--u,transparent)) 50% 100%/51px 3px no-repeat}
.row .run{--u:#7cb3e3}.row .many{background:linear-gradient(90deg,#7cb3e3 80%,#5a83a5 80%) 50% 100%/51px 3px no-repeat}.row .act{background:linear-gradient(#7cb3e3,#7cb3e3) 50% 100%/61px 3px no-repeat,#53564c}
.sc{width:21px;height:100%;background:#f0f0f0;display:flex;flex-direction:column;flex:none;align-items:center}.sc button{height:22px;width:21px}.sc .g{height:19px}.sc .th{height:39px;width:19px;background:#cdcdcd}
.dk{margin:0 10px 0 12px}.desk{flex:none;width:30px;padding-bottom:2px}.tray{display:flex;flex-direction:column;gap:24px;margin-left:5px;flex:none}.tray div{display:flex;width:240px;height:26px}.tray button{width:30px;height:26px}
.more{align-self:flex-start;font-size:22px;line-height:18px;width:12px;margin-left:8px;flex:none}.im{display:flex;align-items:center;gap:18px;margin-left:8px;flex:none}.im span{font-size:16px}
.clock{width:94px;margin-left:10px;padding-bottom:2px;text-align:center;line-height:30px;flex:none}.end{width:6px;height:100%;border-left:1px solid #6a6c62;flex:none}`,
`<button class="st" aria-label="开始">${I('win')}</button><button class="tv" aria-label="任务视图">${I('tview')}</button><div class="dv"></div>
<div class="apps"><div class="row">${R1.map(cell).join('')}</div><div class="row">${R2.map(cell).join('')}</div></div>
<div class="sc"><button aria-label="上">${I('chUp')}</button><div class="g"></div><div class="th"></div><button aria-label="下">${I('chDown')}</button></div>
<div class="dv dk"></div><span class="desk">桌面</span><span class="more">»</span>
<div class="tray"><div>${['tNv','tBox','tWx','tMic','tUsb','tMag','tE','tBd'].map(cell).join('')}</div><div>${['tQq','tS','tPlay','tDev','tNet','tVol','tBat'].map(cell).join('')}</div></div>
<div class="im"><span>中</span>${I('tSogou')}</div><div class="clock">12:50<br>星期二<br>2021/5/18</div><div class="end"></div>`);

define('word-app', `:host{display:flex;flex-direction:column;height:100vh;background:#e6e6e6}.top{background:#2b579a}work-area{flex:1}`,
`<div class="top"><title-bar></title-bar><ribbon-tabs></ribbon-tabs></div><word-ribbon></word-ribbon><work-area></work-area><status-bar></status-bar><task-bar></task-bar>`);
</script>
</body>
</html>
